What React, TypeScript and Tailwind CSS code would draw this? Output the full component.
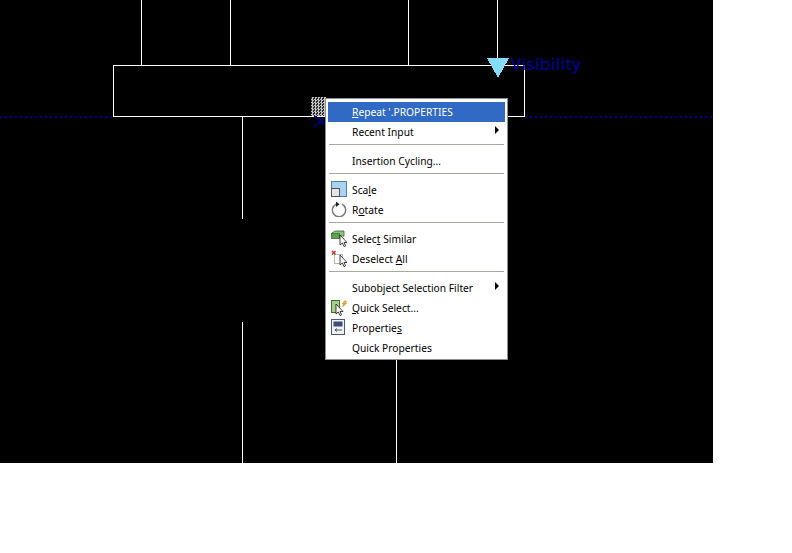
import type { ReactNode } from "react";

const font = { fontFamily: '"Noto Sans", Tahoma, sans-serif' };

function ScaleIcon() {
  return (
    <svg width="16" height="16" viewBox="0 0 16 16">
      <rect x="0.5" y="0.5" width="15" height="15" fill="#a9d3f0" stroke="#4f7fa8" />
      <rect x="0.5" y="7.5" width="8" height="8" fill="#e4e4e4" stroke="#555" />
    </svg>
  );
}

function RotateIcon() {
  return (
    <svg width="16" height="16" viewBox="0 0 16 16" fill="none">
      <path d="M5 3.2A6.6 6.6 0 1 0 11 3.2" stroke="#777" strokeWidth="1.4" />
      <path d="M5 0.5L8.6 3.3L5 6Z" fill="#222" />
    </svg>
  );
}

function Cursor({ x, y }: { x: number; y: number }) {
  return <path transform={`translate(${x} ${y})`} d="M0 0V10L2.4 8L4 11.5L5.6 10.8L4 7.5H7Z" fill="#fff" stroke="#111" strokeWidth="0.8" />;
}

function SimilarIcon() {
  return (
    <svg width="16" height="17" viewBox="0 0 16 17">
      <path d="M1 3L4 1H13V6H1Z" fill="#8fc27a" stroke="#3d6b35" strokeWidth="0.8" />
      <rect x="0.5" y="3.5" width="8" height="5" fill="#62a04f" stroke="#3d6b35" strokeWidth="0.8" />
      <Cursor x={9} y={5} />
    </svg>
  );
}

function DeselectIcon() {
  return (
    <svg width="16" height="17" viewBox="0 0 16 17">
      <path d="M1 1L4.5 4.5M4.5 1L1 4.5" stroke="#c8242c" strokeWidth="1.4" />
      <rect x="3.5" y="4.5" width="8" height="9" fill="none" stroke="#4c8a3c" strokeDasharray="1 1" />
      <Cursor x={9} y={5} />
    </svg>
  );
}

function QuickSelectIcon() {
  return (
    <svg width="16" height="17" viewBox="0 0 16 17">
      <rect x="0.5" y="1.5" width="8" height="12" fill="#a6cf8e" stroke="#3d6b35" />
      <path d="M11 5L14 1.5L15.5 2.5L13.5 4H16L11.5 8L12.5 5Z" fill="#f0b030" stroke="#b87a10" strokeWidth="0.4" />
      <Cursor x={5} y={5} />
    </svg>
  );
}

function PropertiesIcon() {
  return (
    <svg width="14" height="16" viewBox="0 0 14 16">
      <rect x="0.5" y="0.5" width="13" height="15" fill="#eef1f6" stroke="#4a5a78" />
      <rect x="2.5" y="2.5" width="9" height="5" fill="#3d4f78" />
      <path d="M4 11H11M4 11L6 9.5M4 11L6 12.5" stroke="#333" fill="none" strokeWidth="0.8" />
    </svg>
  );
}

function Item({ icon, sub, active, children }: { icon?: ReactNode; sub?: boolean; active?: boolean; children: ReactNode }) {
  return (
    <div className={`relative flex h-5 items-center ${active ? "bg-[#316ac5] text-white" : "text-black"}`}>
      <span className="flex w-[24px] shrink-0 items-center justify-start pb-[2px] pl-[3px]">{icon}</span>
      <span className="whitespace-pre text-[10.25px] leading-5">{children}</span>
      {sub && <span className="absolute top-[4px] right-[6px] h-0 w-0 border-y-[4px] border-l-[4px] border-y-transparent border-l-black" />}
    </div>
  );
}

function Sep() {
  return (
    <div className="flex h-[9px] pt-[2px]">
      <div className="mx-[1px] h-[1px] w-full bg-[#a9a79f]" />
    </div>
  );
}

export default function App() {
  return (
    <div className="h-[553px] w-[792px] overflow-hidden bg-white" style={font}>
      <div className="relative h-[463px] w-[713px] bg-black">
        {/* model space linework */}
        <svg className="absolute top-0 left-0" width="713" height="463" viewBox="0 0 713 463" fill="none" shapeRendering="crispEdges">
          <g stroke="#ffffff">
            <path d="M141.5 0V65M230.5 0V65M408.5 0V65M497.5 0V65" />
            <rect x="113.5" y="65.5" width="411" height="51" />
            <path d="M242.5 117V219M242.5 322V463M396.5 360V463" />
          </g>
          <path d="M0 116.5H113M525 116.5H713" stroke="#00009c" strokeWidth="2" strokeDasharray="2 3" />
          <path d="M314 115L328 127M328 115L314 127" stroke="#00007a" strokeWidth="2" />
          <path d="M487 58H509L498 78Z" fill="#84dcfa" />
        </svg>
        <span className="absolute top-[52px] left-[511px] text-[17px] leading-6 tracking-[0.5px] text-[#0000a8]">Visibility</span>
        <div className="absolute top-[97px] left-[311px] h-[19px] w-[15px] bg-[repeating-conic-gradient(#c4c4c4_0_25%,#2a2a2a_0_50%)] bg-[length:3px_3px]" />

        {/* context menu */}
        <div className="absolute top-[98px] left-[325px] w-[183px] border border-[#8f8f8f] bg-white px-[2px] pt-[3px] pb-[1px]">
          <Item active><u>R</u>epeat '.PROPERTIES</Item>
          <Item sub>Recent Input</Item>
          <Sep />
          <Item>Insertion Cycling...</Item>
          <Sep />
          <Item icon={<ScaleIcon />}>Sca<u>l</u>e</Item>
          <Item icon={<RotateIcon />}>R<u>o</u>tate</Item>
          <Sep />
          <Item icon={<SimilarIcon />}>Selec<u>t</u> Similar</Item>
          <Item icon={<DeselectIcon />}>Deselect <u>A</u>ll</Item>
          <Sep />
          <Item sub>Subobject Selection Filter</Item>
          <Item icon={<QuickSelectIcon />}><u>Q</u>uick Select...</Item>
          <Item icon={<PropertiesIcon />}>Propertie<u>s</u></Item>
          <Item>Quick Properties</Item>
        </div>
      </div>
    </div>
  );
}
